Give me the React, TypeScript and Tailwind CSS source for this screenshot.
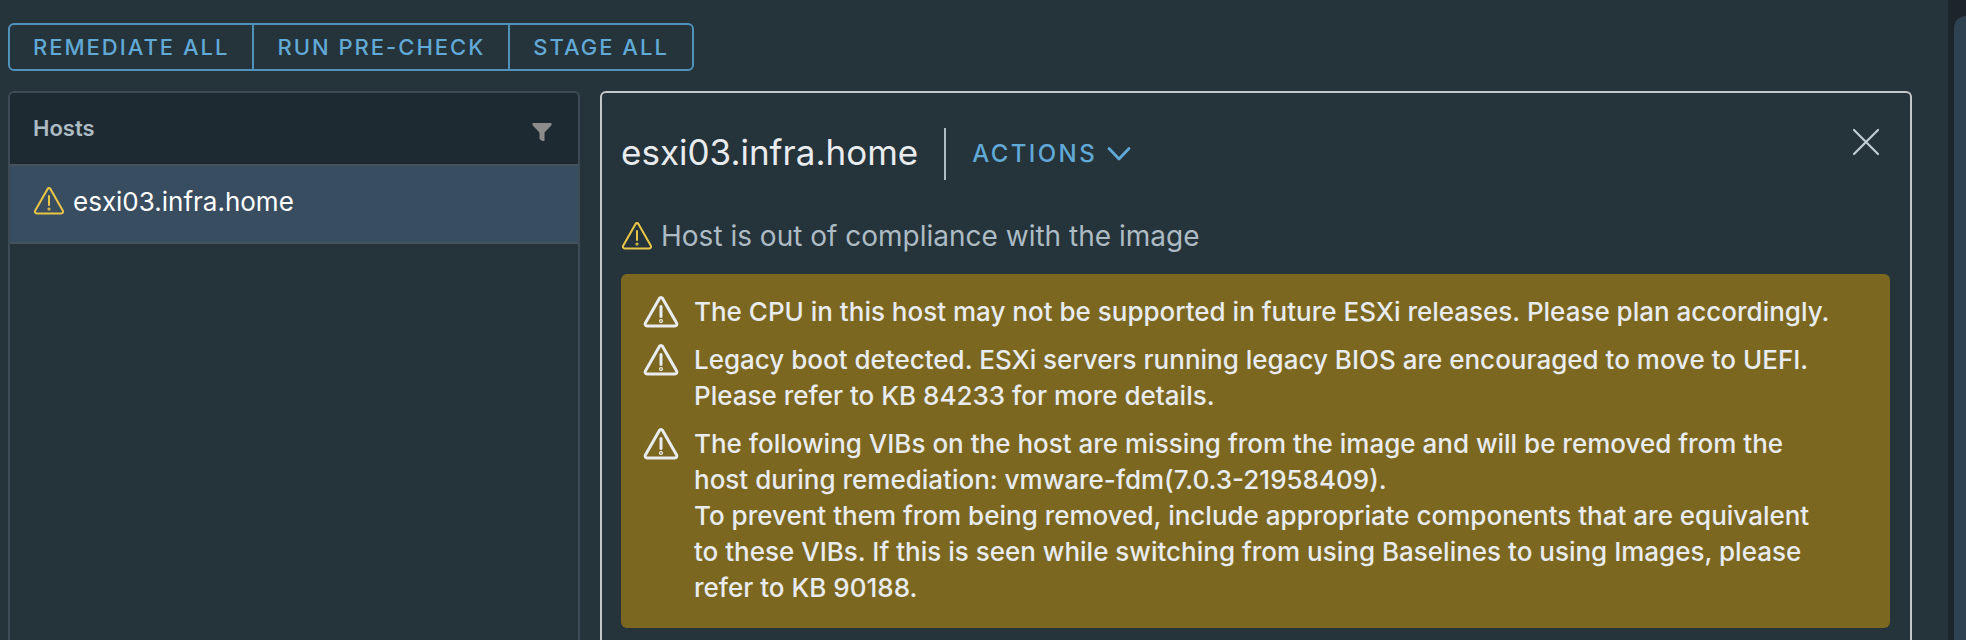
import { useState } from "react";

function WarningIcon({ className, strokeWidth }: { className: string; strokeWidth: number }) {
  return (
    <svg viewBox="0 0 36 36" fill="none" stroke="currentColor" strokeWidth={strokeWidth} strokeLinejoin="round" strokeLinecap="round" className={className} aria-hidden="true">
      <path d="M16.4 4.4a1.9 1.9 0 0 1 3.2 0L33.6 29a2 2 0 0 1-1.7 3H4.100a2 2 0 0 1-1.700-3Z" />
      <path d="M18 12.500V22.500" />
      <circle cx="18" cy="27" r="0.6" fill="currentColor" />
    </svg>
  );
}

const alerts: string[][] = [
  ["The CPU in this host may not be supported in future ESXi releases. Please plan accordingly."],
  ["Legacy boot detected. ESXi servers running legacy BIOS are encouraged to move to UEFI. Please refer to KB 84233 for more details."],
  [
    "The following VIBs on the host are missing from the image and will be removed from the host\u00a0during remediation: vmware-fdm(7.0.3-21958409).",
    "To prevent them from being removed, include appropriate components that are equivalent to\u00a0these VIBs. If this is seen while switching from using Baselines to using Images, please refer\u00a0to\u00a0KB\u00a090188.",
  ],
];

const actions = ["Remediate all", "Run pre-check", "Stage all"];

export default function App() {
  const [open, setOpen] = useState(true);
  return (
    <div className="flex h-screen overflow-hidden bg-[#25333a] font-['Inter','Liberation_Sans',sans-serif] text-[#e9ecef]">
      <main className="flex min-w-0 flex-1 flex-col pt-[23px] pr-9 pl-2">
        <div className="flex h-12 shrink-0 self-start overflow-hidden rounded-md border-2 border-[#4f93bb]">
          {actions.map((label) => (
            <button key={label} type="button" className="border-l-2 border-[#4f93bb] px-[23px] text-[22px] font-medium tracking-[2px] text-[#61a9d6] uppercase first:border-l-0">
              {label}
            </button>
          ))}
        </div>

        <div className="mt-5 flex min-h-0 flex-1 gap-5">
          <section className="w-[572px] shrink-0 rounded-t-md border-2 border-b-0 border-[#3d4b56]">
            <header className="flex h-[73px] items-center justify-between rounded-t border-b-2 border-[#45535d] bg-[#1e2a31] pr-[26px] pl-[23px]">
              <h2 className="text-[22px] font-semibold text-[#adbbc4]">Hosts</h2>
              <button type="button" aria-label="Filter hosts" className="pt-1.5">
                <svg viewBox="0 0 20 20" className="size-5 text-[#8c8c8c]" fill="currentColor" aria-hidden="true">
                  <path d="M0.500 1h19v2.200l-7 7.300v8.500h-2.200l-2.800-2v-6.500l-7-7.300Z" />
                </svg>
              </button>
            </header>
            <button type="button" onClick={() => setOpen(true)} className="flex h-[78px] w-full items-center gap-2 border-b-2 border-[#45535d] bg-[#394d61] pb-1.5 pl-[23px] text-[26px] text-white">
              <WarningIcon className="size-8 text-[#e8c547]" strokeWidth={2.3} />
              esxi03.infra.home
            </button>
          </section>

          {open && (
            <section className="min-w-0 flex-1 rounded-t-md border-2 border-b-0 border-[#c4c8ca] pr-5 pl-[19px]">
              <header className="flex pt-[35px]">
                <h1 className="pr-[26px] text-[35px] leading-[48px]">esxi03.infra.home</h1>
                <div className="flex h-[52px] border-l-2 border-[#adbbc4] pl-[26px]">
                  <button type="button" className="flex items-center gap-2.5 text-[24px] font-medium tracking-widest text-[#61a9d6] uppercase">
                    Actions
                    <svg viewBox="0 0 24 16" className="h-4 w-6" fill="none" stroke="currentColor" strokeWidth="2.8" strokeLinecap="round" strokeLinejoin="round" aria-hidden="true">
                      <path d="M2 2.500l10 10.500l10-10.500" />
                    </svg>
                  </button>
                </div>
                <button type="button" aria-label="Close" onClick={() => setOpen(false)} className="mr-2.5 ml-auto self-start text-[#c1cdd4]">
                  <svg viewBox="0 0 28 28" className="size-7" fill="none" stroke="currentColor" strokeWidth="2.2" strokeLinecap="round" aria-hidden="true">
                    <path d="M2 2l24 24M26 2L2 26" />
                  </svg>
                </button>
              </header>
              <p className="mt-9 flex h-10 items-center gap-2 text-[28px] text-[#adbbc4]">
                <WarningIcon className="size-8 text-[#e8c547]" strokeWidth={2.3} />
                Host is out of compliance with the image
              </p>
              <ul className="mt-[18px] flex flex-col gap-3 rounded-md bg-[#7c6720] pt-5 pr-[54px] pb-[22px] pl-[22px] text-[26px] leading-9 font-medium">
                {alerts.map((paragraphs) => (
                  <li key={paragraphs[0]} className="flex gap-[15px]">
                    <WarningIcon className="size-9 shrink-0" strokeWidth={3} />
                    <div>
                      {paragraphs.map((text) => (
                        <p key={text}>{text}</p>
                      ))}
                    </div>
                  </li>
                ))}
              </ul>
            </section>
          )}
        </div>
      </main>
      <div className="w-[18px] shrink-0 bg-[#1c252c] pt-4 pl-1.5">
        <div className="h-full rounded-tl-xl bg-[#2f4251]" />
      </div>
    </div>
  );
}
